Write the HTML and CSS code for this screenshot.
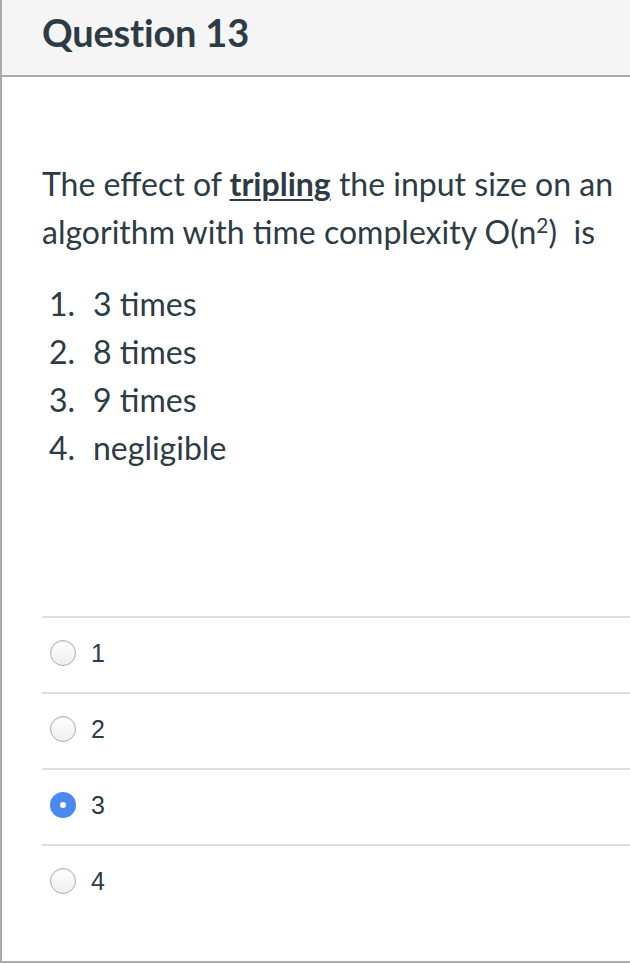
FILE: index.html
```html
<!DOCTYPE html>
<html>
<head>
<meta charset="utf-8">
<link rel="stylesheet" href="styles.css">
</head>
<body>
<div class="question">
  <div class="q-header">
    <h2 class="q-title">Question 13</h2>
  </div>
  <div class="q-body">
    <p class="q-text">The effect of <strong class="u">tripling</strong> the input size on an algorithm with time complexity O(n<sup>2</sup>)&nbsp; is</p>
    <ol class="q-list">
      <li>3 times</li>
      <li>8 times</li>
      <li>9 times</li>
      <li>negligible</li>
    </ol>
    <div class="answers">
      <label class="answer"><span class="radio"></span><span class="a-label">1</span></label>
      <label class="answer"><span class="radio"></span><span class="a-label">2</span></label>
      <label class="answer"><span class="radio checked"></span><span class="a-label">3</span></label>
      <label class="answer"><span class="radio"></span><span class="a-label">4</span></label>
    </div>
  </div>
</div>
</body>
</html>
```
FILE: styles.css
```css
html, body {
  margin: 0;
  padding: 0;
  background: #fff;
}
body {
  font-family: Lato, "Liberation Sans", sans-serif;
  color: #2d3b45;
  overflow: hidden;
}
.question {
  border-left: 2px solid #aaa;
  border-bottom: 2px solid #aaa;
  height: 963px;
  box-sizing: border-box;
}
.q-header {
  background: #f5f5f5;
  border-bottom: 2px solid #aaa;
  display: flex;
  align-items: center;
  padding-left: 40px;
  padding-bottom: 12px;
  box-sizing: border-box;
  height: 77px;
}
.q-title {
  margin: 0;
  font-size: 38px;
  font-weight: 700;
  letter-spacing: -0.2px;
}
.q-body {
  padding: 83px 0 0 40px;
}
.q-text {
  margin: 0;
  font-size: 32px;
  line-height: 48px;
}
.q-text .u {
  text-decoration: underline;
  text-decoration-thickness: 2px;
  text-underline-offset: 3px;
}
.q-text sup {
  font-size: 21px;
  line-height: 0;
  vertical-align: 11px;
}
.q-list {
  list-style: none;
  counter-reset: item;
  margin: 24px 0 0;
  padding: 0 0 0 7px;
  font-size: 32px;
  line-height: 48px;
}
.q-list li {
  counter-increment: item;
}
.q-list li::before {
  content: counter(item) ".";
  display: inline-block;
  width: 44px;
}
.answers {
  margin-top: 144px;
}
.answer {
  display: flex;
  align-items: center;
  height: 70px;
  border-top: 2px solid #ddd;
  padding-left: 8px;
  padding-bottom: 4px;
  gap: 15px;
}
.radio {
  width: 26px;
  height: 26px;
  box-sizing: border-box;
  border-radius: 50%;
  border: 1px solid #aeaeae;
  background: linear-gradient(#fff, #eee);
  box-shadow: inset 0 1px 1px rgba(0,0,0,0.08);
  position: relative;
}
.radio.checked {
  border: none;
  background: #4a8af0;
  box-shadow: none;
}
.radio.checked::after {
  content: "";
  position: absolute;
  left: 10px;
  top: 10px;
  width: 6px;
  height: 6px;
  border-radius: 50%;
  background: #fff;
}
.a-label {
  font-family: "Liberation Sans", Arial, sans-serif;
  font-size: 25px;
}
```
